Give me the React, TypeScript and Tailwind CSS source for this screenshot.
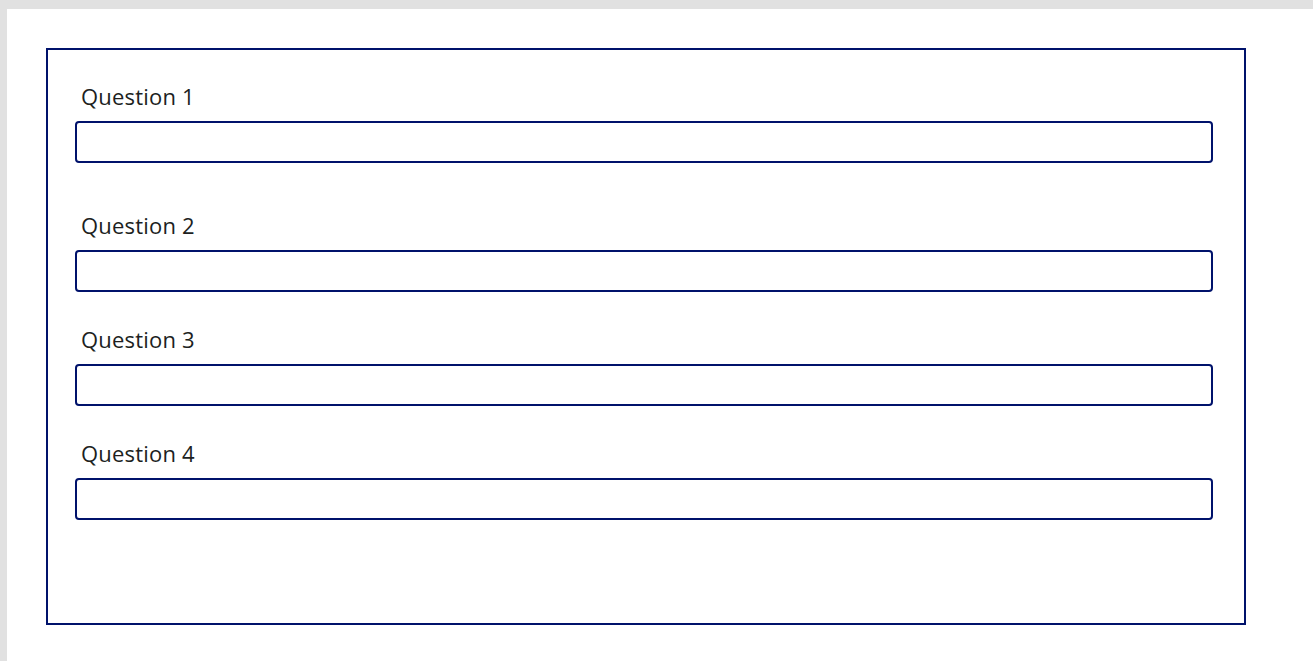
const questions = ["Question 1", "Question 2", "Question 3", "Question 4"]

export default function App() {
    return (
        <div className="h-screen bg-[#e1e1e1] pt-[9px] pl-[7px] flex" style={{ fontFamily: '"Open Sans", "Noto Sans", sans-serif' }}>
            <div className="flex-1 bg-white pt-[39px] pl-[39px]">
                <div className="w-[1200px] h-[577px] border-2 border-[#00126b] pt-[32px] pl-[27px]">
                    {questions.map((q, i) => (
                        <div key={q} className={i === 0 ? "" : i === 1 ? "mt-[48px]" : "mt-[33px]"}>
                            <label className="block h-[28px] leading-[28px] pl-[6px] text-[22px] tracking-[0.2px] text-[#201f1e]">{q}</label>
                            <input
                                type="text"
                                className="mt-[11px] block w-[1138px] h-[42px] rounded-[4px] border-2 border-[#00126b] bg-white outline-none"
                            />
                        </div>
                    ))}
                </div>
            </div>
        </div>
    )
}
